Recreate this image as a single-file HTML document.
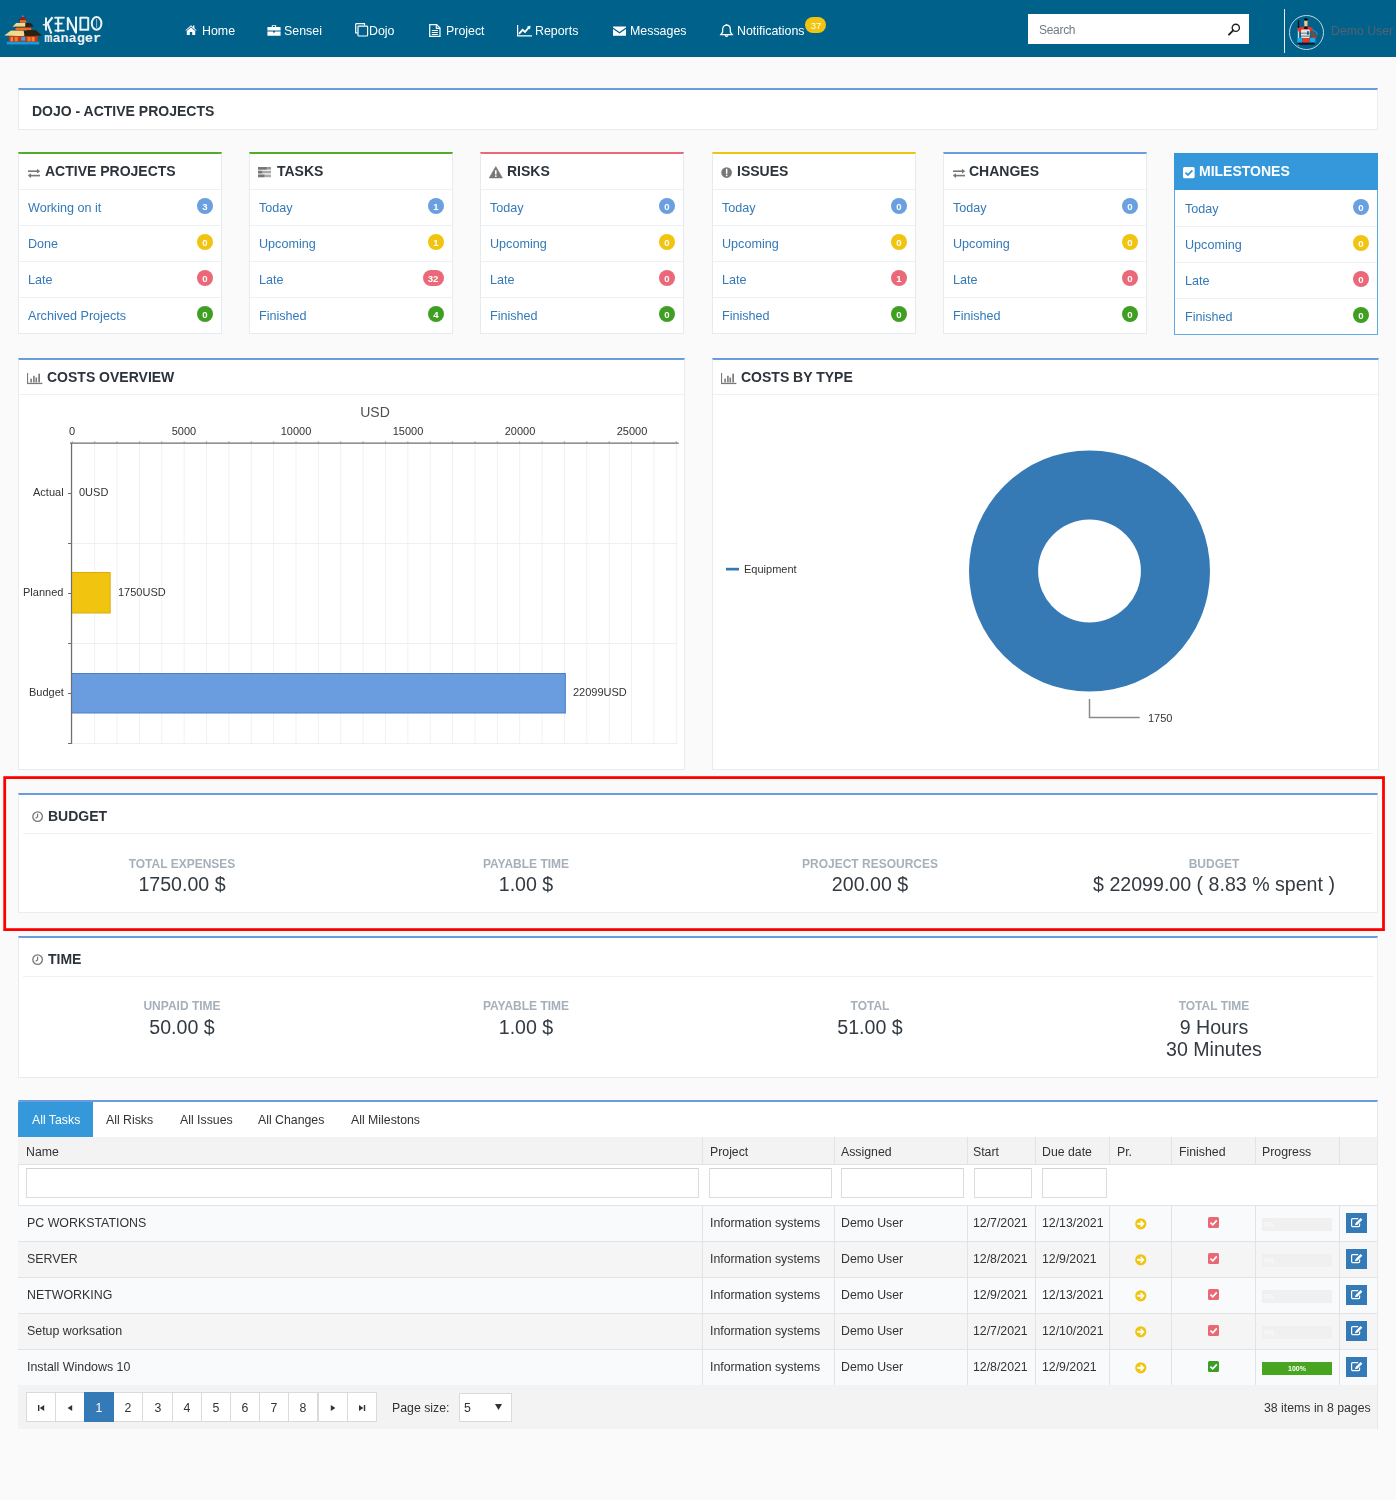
<!DOCTYPE html>
<html><head><meta charset="utf-8"><title>Kendo Manager</title>
<style>
html,body{margin:0;padding:0;}
body{width:1396px;height:1500px;background:#fafafa;position:relative;overflow:hidden;font-family:"Liberation Sans", sans-serif;}
.t{position:absolute;white-space:nowrap;line-height:1;will-change:transform;}
.r{position:absolute;box-sizing:border-box;}
svg.r{overflow:visible;}
</style></head><body>
<div class="r" style="left:0.00px;top:0.00px;width:1396.00px;height:57.00px;background:#00618b;"></div>
<svg class="r" style="left:0.00px;top:0.00px" width="110" height="50" viewBox="0 0 110 50">
<path d="M22.8 14.8 L23.5 17 L22.1 17 Z" fill="#e8c070"/>
<path d="M18.2 19.6 Q20.5 19.2 22.8 16.6 Q25.1 19.2 27.6 19.6 L26.4 20.4 L19.4 20.4 Z" fill="#a01810"/>
<rect x="20" y="20.2" width="6.1" height="2.5" fill="#e8702a"/>
<path d="M12.6 26.8 L16.2 23.1 L25.6 23.1 L25.6 26.8 Z" fill="#f0d890"/>
<path d="M25.4 23.1 L30.6 23.1 L34 26.6 L25.4 27 Z" fill="#2e2012"/>
<rect x="14.6" y="26.8" width="17" height="0.9" fill="#5a1a0c"/>
<rect x="15.6" y="27.6" width="15.6" height="2.6" fill="#ec6a24"/>
<rect x="11" y="30" width="25" height="0.7" fill="#2a1a10"/>
<path d="M4.2 35.4 L11 30.5 L26.8 30.5 L24.2 36.2 Z" fill="#f0d88c"/>
<path d="M23.6 30.5 L36.2 30.5 L42 35.4 L24.6 36.2 Z" fill="#30200e"/>
<rect x="8.9" y="36.1" width="28.9" height="5.7" fill="#c8361a"/>
<rect x="10.6" y="37" width="2.4" height="4.4" fill="#f08a34"/><rect x="14.6" y="37" width="3.2" height="4.4" fill="#f07a2c"/>
<rect x="27.4" y="37" width="3.2" height="4.4" fill="#f07a2c"/><rect x="31.6" y="37" width="3" height="4.4" fill="#f08a34"/>
<rect x="21.3" y="37" width="3.9" height="3.6" fill="#14b4f4"/>
<rect x="6.8" y="41.8" width="32.5" height="2.7" fill="#1a9ad8"/>
<g stroke="#eef3f6" stroke-width="2" fill="none" stroke-linecap="butt">
<path d="M46 17.6 L46 30.6"/><path d="M46.2 25 L52.6 17.2" stroke-width="2.2"/><path d="M47.6 23.6 L51.4 33.6" stroke-width="2.1"/><path d="M42.8 24.8 L46 24.8" stroke-width="1.4"/>
<path d="M58.2 17.2 L58.2 32.2"/><path d="M54.4 17.7 L64.6 17.7" stroke-width="1.9"/><path d="M54.6 23.6 L62.6 23.6" stroke-width="1.9"/><path d="M54.6 30.6 L64.6 30.6" stroke-width="1.9"/>
<path d="M67.8 17.4 L67.8 30.2"/><path d="M67.8 17.4 L75.8 32.6" stroke-width="2.1"/><path d="M76 16.4 L76 33.6"/>
<path d="M80.4 17.2 L80.4 30.4"/><path d="M79.8 17.7 L87.8 17.7"/><path d="M88.2 17.2 L88.2 30.4"/><path d="M79.8 29.7 L88.6 29.7"/>
<ellipse cx="96.6" cy="23.4" rx="4.8" ry="6.4" stroke-width="2"/><path d="M96.6 18.8 L96.6 28" stroke-width="0.9" opacity="0.7"/>
</g>
<text x="44.3" y="41.9" font-family="Liberation Mono" font-size="12.6" font-weight="bold" fill="#eef3f6" textLength="56.7" lengthAdjust="spacingAndGlyphs">manager</text>
</svg>
<svg class="r" style="left:185.00px;top:25.00px" width="12" height="10" viewBox="0 0 12 10"><path d="M6 0.3 L0.2 5.4 L1.4 5.6 L6 1.6 L10.6 5.6 L11.8 5.4 L9.4 3.3 L9.4 0.6 L8 0.6 L8 2.1 Z M1.8 6 L6 2.4 L10.2 6 L10.2 10 L7.2 10 L7.2 7 L4.8 7 L4.8 10 L1.8 10 Z" fill="#fff"/></svg>
<svg class="r" style="left:267.00px;top:25.00px" width="14" height="11" viewBox="0 0 14 11"><path d="M4.8 0.2 L9.2 0.2 L9.2 2 L13.3 2 Q13.6 2 13.6 2.4 L13.6 5.6 L0.4 5.6 L0.4 2.4 Q0.4 2 0.8 2 L4.8 2 Z M5.8 1 L5.8 2 L8.2 2 L8.2 1 Z M0.4 6.5 L6 6.5 L6 7.6 L8 7.6 L8 6.5 L13.6 6.5 L13.6 10.4 Q13.6 10.8 13.2 10.8 L0.8 10.8 Q0.4 10.8 0.4 10.4 Z" fill="#fff"/></svg>
<svg class="r" style="left:355.00px;top:23.00px" width="14" height="14" viewBox="0 0 14 14"><path d="M0.7 0.7 L9.5 0.7 L9.5 2.6 M0.7 0.7 L0.7 9.8 L2.6 9.8" stroke="#fff" stroke-width="1.2" fill="none"/><rect x="3" y="3.2" width="9.6" height="9.8" rx="0.8" stroke="#fff" stroke-width="1.2" fill="none"/></svg>
<svg class="r" style="left:429.00px;top:24.00px" width="12" height="13" viewBox="0 0 12 13"><path d="M0.7 0.7 L7.6 0.7 L11 4.1 L11 12.3 L0.7 12.3 Z" stroke="#fff" stroke-width="1.2" fill="none"/><path d="M7.3 0.8 L7.3 4.4 L10.9 4.4" stroke="#fff" stroke-width="1.1" fill="none"/><rect x="2.8" y="6" width="6" height="1" fill="#fff"/><rect x="2.8" y="8" width="6" height="1" fill="#fff"/><rect x="2.8" y="10" width="6" height="1" fill="#fff"/></svg>
<svg class="r" style="left:517.00px;top:25.00px" width="15" height="12" viewBox="0 0 15 12"><path d="M0.6 0 L0.6 10.8 L15 10.8" stroke="#fff" stroke-width="1.2" fill="none"/><path d="M2 8.8 L5.6 4.8 L8 7 L11.6 2.6" stroke="#fff" stroke-width="1.8" fill="none"/><path d="M10 1.6 L13.6 0.8 L13 4.4 Z" fill="#fff"/></svg>
<svg class="r" style="left:613.00px;top:26.00px" width="13" height="10" viewBox="0 0 13 10"><path d="M0 0.4 L13 0.4 L13 1.6 L6.5 6 L0 1.6 Z M0 3 L6.5 7.4 L13 3 L13 9.8 L0 9.8 Z" fill="#fff"/></svg>
<svg class="r" style="left:720.00px;top:24.00px" width="13" height="13" viewBox="0 0 13 13"><path d="M6.5 1.2 C3.6 1.2 2.6 3.6 2.6 6 L2.6 8.2 L0.8 10.6 L12.2 10.6 L10.4 8.2 L10.4 6 C10.4 3.6 9.4 1.2 6.5 1.2 Z" stroke="#fff" stroke-width="1.3" fill="none"/><circle cx="6.5" cy="0.9" r="0.9" fill="#fff"/><path d="M5 11.4 Q6.5 13.4 8 11.4" stroke="#fff" stroke-width="1.2" fill="none"/></svg>
<div class="t" style="left:201.60px;top:24.70px;font-size:12.4px;color:#fff;font-weight:normal;">Home</div>
<div class="t" style="left:284.40px;top:24.70px;font-size:12.4px;color:#fff;font-weight:normal;">Sensei</div>
<div class="t" style="left:369.20px;top:24.70px;font-size:12.4px;color:#fff;font-weight:normal;">Dojo</div>
<div class="t" style="left:445.90px;top:24.70px;font-size:12.4px;color:#fff;font-weight:normal;">Project</div>
<div class="t" style="left:535.30px;top:24.70px;font-size:12.4px;color:#fff;font-weight:normal;">Reports</div>
<div class="t" style="left:630.00px;top:24.70px;font-size:12.4px;color:#fff;font-weight:normal;">Messages</div>
<div class="t" style="left:736.90px;top:24.70px;font-size:12.4px;color:#fff;font-weight:normal;">Notifications</div>
<div class="r" style="left:804.80px;top:17.30px;width:21.40px;height:16.20px;background:#f1c40f;border-radius:8.1px;"></div>
<div class="t" style="left:415.60px;width:800px;text-align:center;top:21.07px;font-size:9.6px;color:#fff;font-weight:normal;">37</div>
<div class="r" style="left:1028.00px;top:14.00px;width:221.00px;height:30.00px;background:#fff;"></div>
<div class="t" style="left:1039.00px;top:23.84px;font-size:12px;color:#6f7a84;font-weight:normal;letter-spacing:-0.3px;">Search</div>
<svg class="r" style="left:1228.00px;top:23.00px" width="13" height="13" viewBox="0 0 13 13"><circle cx="7.8" cy="4.8" r="3.6" stroke="#222" stroke-width="1.4" fill="none"/><path d="M5.2 7.4 L1 11.6" stroke="#222" stroke-width="2" stroke-linecap="round"/></svg>
<div class="r" style="left:1284.00px;top:9.00px;width:1.20px;height:44.00px;background:#e4ecf1;"></div>
<div class="r" style="left:1288.60px;top:14.60px;width:35.00px;height:35.00px;border:1.3px solid #c4d6e2;border-radius:50%;"></div>
<svg class="r" style="left:1288.00px;top:14.00px" width="38" height="38" viewBox="0 0 38 38">
<rect x="9.8" y="6.3" width="1.4" height="8" fill="#111"/>
<rect x="9.8" y="14" width="1.4" height="17.6" fill="#d8d8d8"/>
<ellipse cx="17.9" cy="5.5" rx="1.7" ry="1.3" fill="#000"/>
<path d="M16.1 6.8 L19.6 6.8 L19.4 12.6 L16.4 12.6 Z" fill="#f2c890"/>
<path d="M9.2 14.8 Q11 12.6 16 12.8 L20 12.8 Q24.6 12.8 25.2 14.8 L24.4 17.6 L20.6 17.2 L15.4 17.2 L11.2 18.2 Z" fill="#e8322a"/>
<rect x="16.2" y="12.6" width="3.4" height="2.6" fill="#111"/>
<rect x="13" y="15.4" width="8.8" height="8.6" rx="1" fill="#e4e4e4"/>
<rect x="13" y="18.6" width="8.8" height="1.2" fill="#888"/><rect x="13" y="21.6" width="8.8" height="1.1" fill="#777"/>
<rect x="19" y="17.2" width="1.8" height="3.6" fill="#0a62a0"/>
<path d="M22.4 17 Q28.6 17.6 29.4 21.4 L27.6 25.4 L22.6 25.2 Z" fill="#555"/>
<path d="M24.6 16.2 Q28.6 17 29.6 20.6" stroke="#10a8ee" stroke-width="1" fill="none"/>
<path d="M24 23.6 L29 21.6 L26.4 25.6 Z" fill="#e03020"/>
<path d="M9.4 24.2 Q12 23.4 14.4 24.2 L14.4 28.8 L9.4 28.8 Z" fill="#10b0f0"/>
<path d="M21.6 24.2 Q24.8 23.4 27.4 24.4 L27.4 28.8 L21.6 28.8 Z" fill="#10b0f0"/>
<rect x="14.4" y="24" width="7.2" height="5.2" rx="1" fill="#e23a30"/>
<rect x="9.4" y="28.6" width="17.4" height="2.2" fill="#0c1c2a"/>
</svg>
<div class="t" style="left:1331.00px;top:24.79px;font-size:12.3px;color:#56616b;font-weight:normal;">Demo User</div>
<div class="r" style="left:18.00px;top:88.00px;width:1360.00px;height:42.00px;background:#fff;border:1px solid #e9ecef;border-top:2px solid #6a9de0;"></div>
<div class="t" style="left:32.00px;top:104.35px;font-size:14px;color:#2c333b;font-weight:bold;">DOJO - ACTIVE PROJECTS</div>
<div class="r" style="left:18.00px;top:152.00px;width:204.00px;height:182.00px;background:#fff;border:1px solid #e6ebf0;border-top:2px solid #50ac2a;"></div>
<svg class="r" style="left:27.00px;top:166.50px" width="14" height="12" viewBox="0 0 14 12"><path d="M1 4.2 L11.5 4.2" stroke="#777" stroke-width="1.6"/><path d="M10 1.8 L13.2 4.2 L10 6.6 Z" fill="#777"/><path d="M2.5 8.6 L13 8.6" stroke="#777" stroke-width="1.6"/><path d="M4 6.2 L0.8 8.6 L4 11 Z" fill="#777"/></svg>
<div class="t" style="left:45.00px;top:164.35px;font-size:14px;color:#2c333b;font-weight:bold;">ACTIVE PROJECTS</div>
<div class="r" style="left:19.00px;top:189.00px;width:202.00px;height:1.00px;background:#eef1f4;"></div>
<div class="t" style="left:27.50px;top:201.73px;font-size:12.6px;color:#337ab7;font-weight:normal;">Working on it</div>
<div class="r" style="left:196.70px;top:198.00px;width:16.00px;height:16.00px;background:#6a9fe0;border-radius:50%;"></div>
<div class="t" style="left:-195.30px;width:800px;text-align:center;top:202.37px;font-size:9.6px;color:#fff;font-weight:bold;">3</div>
<div class="r" style="left:19.00px;top:225.00px;width:202.00px;height:1.00px;background:#eef1f4;"></div>
<div class="t" style="left:27.50px;top:237.73px;font-size:12.6px;color:#337ab7;font-weight:normal;">Done</div>
<div class="r" style="left:196.70px;top:234.00px;width:16.00px;height:16.00px;background:#f1c40f;border-radius:50%;"></div>
<div class="t" style="left:-195.30px;width:800px;text-align:center;top:238.37px;font-size:9.6px;color:#fff;font-weight:bold;">0</div>
<div class="r" style="left:19.00px;top:261.00px;width:202.00px;height:1.00px;background:#eef1f4;"></div>
<div class="t" style="left:27.50px;top:273.73px;font-size:12.6px;color:#337ab7;font-weight:normal;">Late</div>
<div class="r" style="left:196.70px;top:270.00px;width:16.00px;height:16.00px;background:#ea6878;border-radius:50%;"></div>
<div class="t" style="left:-195.30px;width:800px;text-align:center;top:274.37px;font-size:9.6px;color:#fff;font-weight:bold;">0</div>
<div class="r" style="left:19.00px;top:297.00px;width:202.00px;height:1.00px;background:#eef1f4;"></div>
<div class="t" style="left:27.50px;top:309.73px;font-size:12.6px;color:#337ab7;font-weight:normal;">Archived Projects</div>
<div class="r" style="left:196.70px;top:306.00px;width:16.00px;height:16.00px;background:#3f9f22;border-radius:50%;"></div>
<div class="t" style="left:-195.30px;width:800px;text-align:center;top:310.37px;font-size:9.6px;color:#fff;font-weight:bold;">0</div>
<div class="r" style="left:249.00px;top:152.00px;width:204.00px;height:182.00px;background:#fff;border:1px solid #e6ebf0;border-top:2px solid #50ac2a;"></div>
<svg class="r" style="left:258.00px;top:166.00px" width="13" height="12" viewBox="0 0 13 12"><rect x="0" y="1" width="13" height="2.6" fill="#999"/><rect x="0" y="1" width="8.5" height="2.6" fill="#777"/><rect x="0" y="4.8" width="13" height="2.6" fill="#aaa"/><rect x="0" y="4.8" width="4.2" height="2.6" fill="#777"/><rect x="0" y="8.6" width="13" height="2.6" fill="#aaa"/><rect x="0" y="8.6" width="6.4" height="2.6" fill="#777"/></svg>
<div class="t" style="left:277.20px;top:164.35px;font-size:14px;color:#2c333b;font-weight:bold;">TASKS</div>
<div class="r" style="left:250.00px;top:189.00px;width:202.00px;height:1.00px;background:#eef1f4;"></div>
<div class="t" style="left:258.50px;top:201.73px;font-size:12.6px;color:#337ab7;font-weight:normal;">Today</div>
<div class="r" style="left:427.70px;top:198.00px;width:16.00px;height:16.00px;background:#6a9fe0;border-radius:50%;"></div>
<div class="t" style="left:35.70px;width:800px;text-align:center;top:202.37px;font-size:9.6px;color:#fff;font-weight:bold;">1</div>
<div class="r" style="left:250.00px;top:225.00px;width:202.00px;height:1.00px;background:#eef1f4;"></div>
<div class="t" style="left:258.50px;top:237.73px;font-size:12.6px;color:#337ab7;font-weight:normal;">Upcoming</div>
<div class="r" style="left:427.70px;top:234.00px;width:16.00px;height:16.00px;background:#f1c40f;border-radius:50%;"></div>
<div class="t" style="left:35.70px;width:800px;text-align:center;top:238.37px;font-size:9.6px;color:#fff;font-weight:bold;">1</div>
<div class="r" style="left:250.00px;top:261.00px;width:202.00px;height:1.00px;background:#eef1f4;"></div>
<div class="t" style="left:258.50px;top:273.73px;font-size:12.6px;color:#337ab7;font-weight:normal;">Late</div>
<div class="r" style="left:422.70px;top:270.00px;width:21.00px;height:16.00px;background:#ea6878;border-radius:8px;"></div>
<div class="t" style="left:33.20px;width:800px;text-align:center;top:274.37px;font-size:9.6px;color:#fff;font-weight:bold;">32</div>
<div class="r" style="left:250.00px;top:297.00px;width:202.00px;height:1.00px;background:#eef1f4;"></div>
<div class="t" style="left:258.50px;top:309.73px;font-size:12.6px;color:#337ab7;font-weight:normal;">Finished</div>
<div class="r" style="left:427.70px;top:306.00px;width:16.00px;height:16.00px;background:#3f9f22;border-radius:50%;"></div>
<div class="t" style="left:35.70px;width:800px;text-align:center;top:310.37px;font-size:9.6px;color:#fff;font-weight:bold;">4</div>
<div class="r" style="left:480.00px;top:152.00px;width:204.00px;height:182.00px;background:#fff;border:1px solid #e6ebf0;border-top:2px solid #ea6878;"></div>
<svg class="r" style="left:488.60px;top:165.60px" width="14" height="13" viewBox="0 0 14 13"><path d="M6.8 0.6 L13.4 11.9 L0.2 11.9 Z" fill="#777" stroke="#777" stroke-width="0.6" stroke-linejoin="round"/><rect x="6" y="4.2" width="1.6" height="4.3" fill="#fff"/><rect x="6" y="9.4" width="1.6" height="1.5" fill="#fff"/></svg>
<div class="t" style="left:507.40px;top:164.35px;font-size:14px;color:#2c333b;font-weight:bold;">RISKS</div>
<div class="r" style="left:481.00px;top:189.00px;width:202.00px;height:1.00px;background:#eef1f4;"></div>
<div class="t" style="left:489.50px;top:201.73px;font-size:12.6px;color:#337ab7;font-weight:normal;">Today</div>
<div class="r" style="left:658.70px;top:198.00px;width:16.00px;height:16.00px;background:#6a9fe0;border-radius:50%;"></div>
<div class="t" style="left:266.70px;width:800px;text-align:center;top:202.37px;font-size:9.6px;color:#fff;font-weight:bold;">0</div>
<div class="r" style="left:481.00px;top:225.00px;width:202.00px;height:1.00px;background:#eef1f4;"></div>
<div class="t" style="left:489.50px;top:237.73px;font-size:12.6px;color:#337ab7;font-weight:normal;">Upcoming</div>
<div class="r" style="left:658.70px;top:234.00px;width:16.00px;height:16.00px;background:#f1c40f;border-radius:50%;"></div>
<div class="t" style="left:266.70px;width:800px;text-align:center;top:238.37px;font-size:9.6px;color:#fff;font-weight:bold;">0</div>
<div class="r" style="left:481.00px;top:261.00px;width:202.00px;height:1.00px;background:#eef1f4;"></div>
<div class="t" style="left:489.50px;top:273.73px;font-size:12.6px;color:#337ab7;font-weight:normal;">Late</div>
<div class="r" style="left:658.70px;top:270.00px;width:16.00px;height:16.00px;background:#ea6878;border-radius:50%;"></div>
<div class="t" style="left:266.70px;width:800px;text-align:center;top:274.37px;font-size:9.6px;color:#fff;font-weight:bold;">0</div>
<div class="r" style="left:481.00px;top:297.00px;width:202.00px;height:1.00px;background:#eef1f4;"></div>
<div class="t" style="left:489.50px;top:309.73px;font-size:12.6px;color:#337ab7;font-weight:normal;">Finished</div>
<div class="r" style="left:658.70px;top:306.00px;width:16.00px;height:16.00px;background:#3f9f22;border-radius:50%;"></div>
<div class="t" style="left:266.70px;width:800px;text-align:center;top:310.37px;font-size:9.6px;color:#fff;font-weight:bold;">0</div>
<div class="r" style="left:712.00px;top:152.00px;width:204.00px;height:182.00px;background:#fff;border:1px solid #e6ebf0;border-top:2px solid #f1c40f;"></div>
<svg class="r" style="left:720.70px;top:165.60px" width="12" height="13" viewBox="0 0 12 13"><circle cx="5.6" cy="6.6" r="5.3" fill="#777"/><rect x="4.9" y="2.8" width="1.5" height="5" fill="#fff"/><rect x="4.9" y="8.7" width="1.5" height="1.5" fill="#fff"/></svg>
<div class="t" style="left:737.10px;top:164.35px;font-size:14px;color:#2c333b;font-weight:bold;">ISSUES</div>
<div class="r" style="left:713.00px;top:189.00px;width:202.00px;height:1.00px;background:#eef1f4;"></div>
<div class="t" style="left:721.50px;top:201.73px;font-size:12.6px;color:#337ab7;font-weight:normal;">Today</div>
<div class="r" style="left:890.70px;top:198.00px;width:16.00px;height:16.00px;background:#6a9fe0;border-radius:50%;"></div>
<div class="t" style="left:498.70px;width:800px;text-align:center;top:202.37px;font-size:9.6px;color:#fff;font-weight:bold;">0</div>
<div class="r" style="left:713.00px;top:225.00px;width:202.00px;height:1.00px;background:#eef1f4;"></div>
<div class="t" style="left:721.50px;top:237.73px;font-size:12.6px;color:#337ab7;font-weight:normal;">Upcoming</div>
<div class="r" style="left:890.70px;top:234.00px;width:16.00px;height:16.00px;background:#f1c40f;border-radius:50%;"></div>
<div class="t" style="left:498.70px;width:800px;text-align:center;top:238.37px;font-size:9.6px;color:#fff;font-weight:bold;">0</div>
<div class="r" style="left:713.00px;top:261.00px;width:202.00px;height:1.00px;background:#eef1f4;"></div>
<div class="t" style="left:721.50px;top:273.73px;font-size:12.6px;color:#337ab7;font-weight:normal;">Late</div>
<div class="r" style="left:890.70px;top:270.00px;width:16.00px;height:16.00px;background:#ea6878;border-radius:50%;"></div>
<div class="t" style="left:498.70px;width:800px;text-align:center;top:274.37px;font-size:9.6px;color:#fff;font-weight:bold;">1</div>
<div class="r" style="left:713.00px;top:297.00px;width:202.00px;height:1.00px;background:#eef1f4;"></div>
<div class="t" style="left:721.50px;top:309.73px;font-size:12.6px;color:#337ab7;font-weight:normal;">Finished</div>
<div class="r" style="left:890.70px;top:306.00px;width:16.00px;height:16.00px;background:#3f9f22;border-radius:50%;"></div>
<div class="t" style="left:498.70px;width:800px;text-align:center;top:310.37px;font-size:9.6px;color:#fff;font-weight:bold;">0</div>
<div class="r" style="left:943.00px;top:152.00px;width:204.00px;height:182.00px;background:#fff;border:1px solid #e6ebf0;border-top:2px solid #6a9de0;"></div>
<svg class="r" style="left:952.00px;top:166.50px" width="14" height="12" viewBox="0 0 14 12"><path d="M1 4.2 L11.5 4.2" stroke="#777" stroke-width="1.6"/><path d="M10 1.8 L13.2 4.2 L10 6.6 Z" fill="#777"/><path d="M2.5 8.6 L13 8.6" stroke="#777" stroke-width="1.6"/><path d="M4 6.2 L0.8 8.6 L4 11 Z" fill="#777"/></svg>
<div class="t" style="left:969.40px;top:164.35px;font-size:14px;color:#2c333b;font-weight:bold;">CHANGES</div>
<div class="r" style="left:944.00px;top:189.00px;width:202.00px;height:1.00px;background:#eef1f4;"></div>
<div class="t" style="left:952.50px;top:201.73px;font-size:12.6px;color:#337ab7;font-weight:normal;">Today</div>
<div class="r" style="left:1121.70px;top:198.00px;width:16.00px;height:16.00px;background:#6a9fe0;border-radius:50%;"></div>
<div class="t" style="left:729.70px;width:800px;text-align:center;top:202.37px;font-size:9.6px;color:#fff;font-weight:bold;">0</div>
<div class="r" style="left:944.00px;top:225.00px;width:202.00px;height:1.00px;background:#eef1f4;"></div>
<div class="t" style="left:952.50px;top:237.73px;font-size:12.6px;color:#337ab7;font-weight:normal;">Upcoming</div>
<div class="r" style="left:1121.70px;top:234.00px;width:16.00px;height:16.00px;background:#f1c40f;border-radius:50%;"></div>
<div class="t" style="left:729.70px;width:800px;text-align:center;top:238.37px;font-size:9.6px;color:#fff;font-weight:bold;">0</div>
<div class="r" style="left:944.00px;top:261.00px;width:202.00px;height:1.00px;background:#eef1f4;"></div>
<div class="t" style="left:952.50px;top:273.73px;font-size:12.6px;color:#337ab7;font-weight:normal;">Late</div>
<div class="r" style="left:1121.70px;top:270.00px;width:16.00px;height:16.00px;background:#ea6878;border-radius:50%;"></div>
<div class="t" style="left:729.70px;width:800px;text-align:center;top:274.37px;font-size:9.6px;color:#fff;font-weight:bold;">0</div>
<div class="r" style="left:944.00px;top:297.00px;width:202.00px;height:1.00px;background:#eef1f4;"></div>
<div class="t" style="left:952.50px;top:309.73px;font-size:12.6px;color:#337ab7;font-weight:normal;">Finished</div>
<div class="r" style="left:1121.70px;top:306.00px;width:16.00px;height:16.00px;background:#3f9f22;border-radius:50%;"></div>
<div class="t" style="left:729.70px;width:800px;text-align:center;top:310.37px;font-size:9.6px;color:#fff;font-weight:bold;">0</div>
<div class="r" style="left:1174.00px;top:152.50px;width:204.00px;height:182.50px;background:#fff;border:1px solid #5fa8e2;border-top:1px solid #5b93d8;"></div>
<div class="r" style="left:1174.00px;top:152.50px;width:204.00px;height:37.50px;background:#3498db;"></div>
<svg class="r" style="left:1182.50px;top:166.50px" width="12" height="12" viewBox="0 0 12 12"><rect x="0" y="0" width="11.6" height="11.3" rx="1.6" fill="#fff"/><path d="M2.4 5.6 L4.9 8 L9.4 3.4" stroke="#3498db" stroke-width="1.8" fill="none"/></svg>
<div class="t" style="left:1198.90px;top:164.35px;font-size:14px;color:#fff;font-weight:bold;">MILESTONES</div>
<div class="t" style="left:1184.50px;top:202.73px;font-size:12.6px;color:#337ab7;font-weight:normal;">Today</div>
<div class="r" style="left:1352.70px;top:199.00px;width:16.00px;height:16.00px;background:#6a9fe0;border-radius:50%;"></div>
<div class="t" style="left:960.70px;width:800px;text-align:center;top:203.37px;font-size:9.6px;color:#fff;font-weight:bold;">0</div>
<div class="r" style="left:1175.00px;top:226.00px;width:202.00px;height:1.00px;background:#eef1f4;"></div>
<div class="t" style="left:1184.50px;top:238.73px;font-size:12.6px;color:#337ab7;font-weight:normal;">Upcoming</div>
<div class="r" style="left:1352.70px;top:235.00px;width:16.00px;height:16.00px;background:#f1c40f;border-radius:50%;"></div>
<div class="t" style="left:960.70px;width:800px;text-align:center;top:239.37px;font-size:9.6px;color:#fff;font-weight:bold;">0</div>
<div class="r" style="left:1175.00px;top:262.00px;width:202.00px;height:1.00px;background:#eef1f4;"></div>
<div class="t" style="left:1184.50px;top:274.73px;font-size:12.6px;color:#337ab7;font-weight:normal;">Late</div>
<div class="r" style="left:1352.70px;top:271.00px;width:16.00px;height:16.00px;background:#ea6878;border-radius:50%;"></div>
<div class="t" style="left:960.70px;width:800px;text-align:center;top:275.37px;font-size:9.6px;color:#fff;font-weight:bold;">0</div>
<div class="r" style="left:1175.00px;top:298.00px;width:202.00px;height:1.00px;background:#eef1f4;"></div>
<div class="t" style="left:1184.50px;top:310.73px;font-size:12.6px;color:#337ab7;font-weight:normal;">Finished</div>
<div class="r" style="left:1352.70px;top:307.00px;width:16.00px;height:16.00px;background:#3f9f22;border-radius:50%;"></div>
<div class="t" style="left:960.70px;width:800px;text-align:center;top:311.37px;font-size:9.6px;color:#fff;font-weight:bold;">0</div>
<div class="r" style="left:18.00px;top:358.00px;width:666.50px;height:412.00px;background:#fff;border:1px solid #e9ecef;border-top:2px solid #6a9de0;"></div>
<div class="r" style="left:19.00px;top:394.00px;width:664.50px;height:1.00px;background:#eef1f4;"></div>
<svg class="r" style="left:26.50px;top:372.50px" width="17" height="12" viewBox="0 0 17 12"><rect x="0" y="0" width="1.1" height="11" fill="#7a7a7a"/><rect x="0" y="9.8" width="15.4" height="1.3" fill="#7a7a7a"/><rect x="3.3" y="5.6" width="1.6" height="3.8" fill="#7a7a7a"/><rect x="6.1" y="2.8" width="1.6" height="6.6" fill="#7a7a7a"/><rect x="8.5" y="4.5" width="1.6" height="4.9" fill="#7a7a7a"/><rect x="11.3" y="0.7" width="1.7" height="8.7" fill="#7a7a7a"/></svg>
<div class="r" style="left:712.00px;top:358.00px;width:666.50px;height:412.00px;background:#fff;border:1px solid #e9ecef;border-top:2px solid #6a9de0;"></div>
<div class="r" style="left:713.00px;top:394.00px;width:664.50px;height:1.00px;background:#eef1f4;"></div>
<svg class="r" style="left:720.50px;top:372.50px" width="17" height="12" viewBox="0 0 17 12"><rect x="0" y="0" width="1.1" height="11" fill="#7a7a7a"/><rect x="0" y="9.8" width="15.4" height="1.3" fill="#7a7a7a"/><rect x="3.3" y="5.6" width="1.6" height="3.8" fill="#7a7a7a"/><rect x="6.1" y="2.8" width="1.6" height="6.6" fill="#7a7a7a"/><rect x="8.5" y="4.5" width="1.6" height="4.9" fill="#7a7a7a"/><rect x="11.3" y="0.7" width="1.7" height="8.7" fill="#7a7a7a"/></svg>
<div class="t" style="left:47.40px;top:370.35px;font-size:14px;color:#2c333b;font-weight:bold;">COSTS OVERVIEW</div>
<div class="t" style="left:741.00px;top:370.35px;font-size:14px;color:#2c333b;font-weight:bold;">COSTS BY TYPE</div>
<svg class="r" style="left:0;top:0" width="700" height="780"><line x1="72.30" y1="443" x2="72.30" y2="743" stroke="#f1f1f1" stroke-width="1"/><line x1="72.30" y1="441" x2="72.30" y2="443" stroke="#bbb" stroke-width="1"/><line x1="94.67" y1="443" x2="94.67" y2="743" stroke="#f1f1f1" stroke-width="1"/><line x1="94.67" y1="441" x2="94.67" y2="443" stroke="#bbb" stroke-width="1"/><line x1="117.04" y1="443" x2="117.04" y2="743" stroke="#f1f1f1" stroke-width="1"/><line x1="117.04" y1="441" x2="117.04" y2="443" stroke="#bbb" stroke-width="1"/><line x1="139.41" y1="443" x2="139.41" y2="743" stroke="#f1f1f1" stroke-width="1"/><line x1="139.41" y1="441" x2="139.41" y2="443" stroke="#bbb" stroke-width="1"/><line x1="161.78" y1="443" x2="161.78" y2="743" stroke="#f1f1f1" stroke-width="1"/><line x1="161.78" y1="441" x2="161.78" y2="443" stroke="#bbb" stroke-width="1"/><line x1="184.15" y1="443" x2="184.15" y2="743" stroke="#f1f1f1" stroke-width="1"/><line x1="184.15" y1="441" x2="184.15" y2="443" stroke="#bbb" stroke-width="1"/><line x1="206.52" y1="443" x2="206.52" y2="743" stroke="#f1f1f1" stroke-width="1"/><line x1="206.52" y1="441" x2="206.52" y2="443" stroke="#bbb" stroke-width="1"/><line x1="228.89" y1="443" x2="228.89" y2="743" stroke="#f1f1f1" stroke-width="1"/><line x1="228.89" y1="441" x2="228.89" y2="443" stroke="#bbb" stroke-width="1"/><line x1="251.26" y1="443" x2="251.26" y2="743" stroke="#f1f1f1" stroke-width="1"/><line x1="251.26" y1="441" x2="251.26" y2="443" stroke="#bbb" stroke-width="1"/><line x1="273.63" y1="443" x2="273.63" y2="743" stroke="#f1f1f1" stroke-width="1"/><line x1="273.63" y1="441" x2="273.63" y2="443" stroke="#bbb" stroke-width="1"/><line x1="296.00" y1="443" x2="296.00" y2="743" stroke="#f1f1f1" stroke-width="1"/><line x1="296.00" y1="441" x2="296.00" y2="443" stroke="#bbb" stroke-width="1"/><line x1="318.37" y1="443" x2="318.37" y2="743" stroke="#f1f1f1" stroke-width="1"/><line x1="318.37" y1="441" x2="318.37" y2="443" stroke="#bbb" stroke-width="1"/><line x1="340.74" y1="443" x2="340.74" y2="743" stroke="#f1f1f1" stroke-width="1"/><line x1="340.74" y1="441" x2="340.74" y2="443" stroke="#bbb" stroke-width="1"/><line x1="363.11" y1="443" x2="363.11" y2="743" stroke="#f1f1f1" stroke-width="1"/><line x1="363.11" y1="441" x2="363.11" y2="443" stroke="#bbb" stroke-width="1"/><line x1="385.48" y1="443" x2="385.48" y2="743" stroke="#f1f1f1" stroke-width="1"/><line x1="385.48" y1="441" x2="385.48" y2="443" stroke="#bbb" stroke-width="1"/><line x1="407.85" y1="443" x2="407.85" y2="743" stroke="#f1f1f1" stroke-width="1"/><line x1="407.85" y1="441" x2="407.85" y2="443" stroke="#bbb" stroke-width="1"/><line x1="430.22" y1="443" x2="430.22" y2="743" stroke="#f1f1f1" stroke-width="1"/><line x1="430.22" y1="441" x2="430.22" y2="443" stroke="#bbb" stroke-width="1"/><line x1="452.59" y1="443" x2="452.59" y2="743" stroke="#f1f1f1" stroke-width="1"/><line x1="452.59" y1="441" x2="452.59" y2="443" stroke="#bbb" stroke-width="1"/><line x1="474.96" y1="443" x2="474.96" y2="743" stroke="#f1f1f1" stroke-width="1"/><line x1="474.96" y1="441" x2="474.96" y2="443" stroke="#bbb" stroke-width="1"/><line x1="497.33" y1="443" x2="497.33" y2="743" stroke="#f1f1f1" stroke-width="1"/><line x1="497.33" y1="441" x2="497.33" y2="443" stroke="#bbb" stroke-width="1"/><line x1="519.70" y1="443" x2="519.70" y2="743" stroke="#f1f1f1" stroke-width="1"/><line x1="519.70" y1="441" x2="519.70" y2="443" stroke="#bbb" stroke-width="1"/><line x1="542.07" y1="443" x2="542.07" y2="743" stroke="#f1f1f1" stroke-width="1"/><line x1="542.07" y1="441" x2="542.07" y2="443" stroke="#bbb" stroke-width="1"/><line x1="564.44" y1="443" x2="564.44" y2="743" stroke="#f1f1f1" stroke-width="1"/><line x1="564.44" y1="441" x2="564.44" y2="443" stroke="#bbb" stroke-width="1"/><line x1="586.81" y1="443" x2="586.81" y2="743" stroke="#f1f1f1" stroke-width="1"/><line x1="586.81" y1="441" x2="586.81" y2="443" stroke="#bbb" stroke-width="1"/><line x1="609.18" y1="443" x2="609.18" y2="743" stroke="#f1f1f1" stroke-width="1"/><line x1="609.18" y1="441" x2="609.18" y2="443" stroke="#bbb" stroke-width="1"/><line x1="631.55" y1="443" x2="631.55" y2="743" stroke="#f1f1f1" stroke-width="1"/><line x1="631.55" y1="441" x2="631.55" y2="443" stroke="#bbb" stroke-width="1"/><line x1="653.92" y1="443" x2="653.92" y2="743" stroke="#f1f1f1" stroke-width="1"/><line x1="653.92" y1="441" x2="653.92" y2="443" stroke="#bbb" stroke-width="1"/><line x1="676.29" y1="443" x2="676.29" y2="743" stroke="#f1f1f1" stroke-width="1"/><line x1="676.29" y1="441" x2="676.29" y2="443" stroke="#bbb" stroke-width="1"/><line x1="72" y1="543.5" x2="678" y2="543.5" stroke="#efefef" stroke-width="1"/><line x1="72" y1="643.5" x2="678" y2="643.5" stroke="#efefef" stroke-width="1"/><line x1="72" y1="743.5" x2="678" y2="743.5" stroke="#efefef" stroke-width="1"/><rect x="71.5" y="572.5" width="38.65" height="40.5" fill="#f1c40f" stroke="#d9ac0a" stroke-width="1"/><rect x="71.5" y="673.5" width="493.85" height="39.5" fill="#6a9de0" stroke="#4c7fc4" stroke-width="1"/><line x1="70" y1="443.1" x2="678.7" y2="443.1" stroke="#6e6e6e" stroke-width="1.3"/><line x1="71.5" y1="443" x2="71.5" y2="744" stroke="#6e6e6e" stroke-width="1.2"/><line x1="68" y1="493.5" x2="71.5" y2="493.5" stroke="#6e6e6e" stroke-width="1"/><line x1="68" y1="543.5" x2="71.5" y2="543.5" stroke="#6e6e6e" stroke-width="1"/><line x1="68" y1="593.5" x2="71.5" y2="593.5" stroke="#6e6e6e" stroke-width="1"/><line x1="68" y1="643.5" x2="71.5" y2="643.5" stroke="#6e6e6e" stroke-width="1"/><line x1="68" y1="693.5" x2="71.5" y2="693.5" stroke="#6e6e6e" stroke-width="1"/><line x1="68" y1="743.5" x2="71.5" y2="743.5" stroke="#6e6e6e" stroke-width="1"/></svg>
<div class="t" style="left:-25.00px;width:800px;text-align:center;top:405.35px;font-size:14px;color:#505050;font-weight:normal;">USD</div>
<div class="t" style="left:-327.70px;width:800px;text-align:center;top:426.19px;font-size:11px;color:#333;font-weight:normal;">0</div>
<div class="t" style="left:-215.85px;width:800px;text-align:center;top:426.19px;font-size:11px;color:#333;font-weight:normal;">5000</div>
<div class="t" style="left:-104.00px;width:800px;text-align:center;top:426.19px;font-size:11px;color:#333;font-weight:normal;">10000</div>
<div class="t" style="left:7.85px;width:800px;text-align:center;top:426.19px;font-size:11px;color:#333;font-weight:normal;">15000</div>
<div class="t" style="left:119.70px;width:800px;text-align:center;top:426.19px;font-size:11px;color:#333;font-weight:normal;">20000</div>
<div class="t" style="left:231.55px;width:800px;text-align:center;top:426.19px;font-size:11px;color:#333;font-weight:normal;">25000</div>
<div class="t" style="right:1332.50px;text-align:right;top:487.49px;font-size:11px;color:#333;font-weight:normal;">Actual</div>
<div class="t" style="right:1332.50px;text-align:right;top:587.49px;font-size:11px;color:#333;font-weight:normal;">Planned</div>
<div class="t" style="right:1332.50px;text-align:right;top:687.49px;font-size:11px;color:#333;font-weight:normal;">Budget</div>
<div class="t" style="left:79.00px;top:487.49px;font-size:11px;color:#333;font-weight:normal;">0USD</div>
<div class="t" style="left:118.00px;top:587.49px;font-size:11px;color:#333;font-weight:normal;">1750USD</div>
<div class="t" style="left:573.00px;top:687.49px;font-size:11px;color:#333;font-weight:normal;">22099USD</div>
<svg class="r" style="left:700px;top:350px" width="696" height="430"><path fill-rule="evenodd" fill="#3579b5" d="M269.0,221 a120.5,120.5 0 1,0 241.0,0 a120.5,120.5 0 1,0 -241.0,0 Z M338.1,221 a51.4,51.4 0 1,0 102.8,0 a51.4,51.4 0 1,0 -102.8,0 Z"/><path d="M389.5 349 L389.5 367.5 L439.70000000000005 367.5" stroke="#8a8a8a" stroke-width="1.5" fill="none"/><rect x="26" y="217.8" width="13" height="2.7" fill="#3579b5"/></svg>
<div class="t" style="left:1148.00px;top:712.69px;font-size:11px;color:#333;font-weight:normal;">1750</div>
<div class="t" style="left:744.00px;top:564.39px;font-size:11px;color:#333;font-weight:normal;">Equipment</div>
<svg class="r" style="left:0;top:770px" width="1396" height="170"><rect x="4.7" y="7.6" width="1378.8" height="152" fill="none" stroke="#ff0000" stroke-width="2.8"/></svg>
<div class="r" style="left:18.00px;top:793.00px;width:1360.00px;height:120.00px;background:#fff;border:1px solid #e9ecef;border-top:2px solid #6a9de0;"></div>
<div class="r" style="left:23.00px;top:833.00px;width:1350.00px;height:1.00px;background:#eef1f4;"></div>
<svg class="r" style="left:32.00px;top:811.20px" width="12" height="12" viewBox="0 0 12 12"><circle cx="5.6" cy="5.6" r="4.8" stroke="#777" stroke-width="1.3" fill="none"/><path d="M5.6 2.8 L5.6 5.9 L3.6 7.2" stroke="#777" stroke-width="1.2" fill="none"/></svg>
<div class="t" style="left:48.00px;top:809.35px;font-size:14px;color:#2c333b;font-weight:bold;">BUDGET</div>
<div class="t" style="left:-218.00px;width:800px;text-align:center;top:858.04px;font-size:12px;color:#a6b0ba;font-weight:bold;">TOTAL EXPENSES</div>
<div class="t" style="left:-218.00px;width:800px;text-align:center;top:875.11px;font-size:19.6px;color:#333a42;font-weight:normal;">1750.00 $</div>
<div class="t" style="left:126.00px;width:800px;text-align:center;top:858.04px;font-size:12px;color:#a6b0ba;font-weight:bold;">PAYABLE TIME</div>
<div class="t" style="left:126.00px;width:800px;text-align:center;top:875.11px;font-size:19.6px;color:#333a42;font-weight:normal;">1.00 $</div>
<div class="t" style="left:470.00px;width:800px;text-align:center;top:858.04px;font-size:12px;color:#a6b0ba;font-weight:bold;">PROJECT RESOURCES</div>
<div class="t" style="left:470.00px;width:800px;text-align:center;top:875.11px;font-size:19.6px;color:#333a42;font-weight:normal;">200.00 $</div>
<div class="t" style="left:814.00px;width:800px;text-align:center;top:858.04px;font-size:12px;color:#a6b0ba;font-weight:bold;">BUDGET</div>
<div class="t" style="left:814.00px;width:800px;text-align:center;top:875.11px;font-size:19.6px;color:#333a42;font-weight:normal;">$ 22099.00 ( 8.83 % spent )</div>
<div class="r" style="left:18.00px;top:936.00px;width:1360.00px;height:142.00px;background:#fff;border:1px solid #e9ecef;border-top:2px solid #6a9de0;"></div>
<div class="r" style="left:23.00px;top:976.00px;width:1350.00px;height:1.00px;background:#eef1f4;"></div>
<svg class="r" style="left:32.00px;top:954.00px" width="12" height="12" viewBox="0 0 12 12"><circle cx="5.6" cy="5.6" r="4.8" stroke="#777" stroke-width="1.3" fill="none"/><path d="M5.6 2.8 L5.6 5.9 L3.6 7.2" stroke="#777" stroke-width="1.2" fill="none"/></svg>
<div class="t" style="left:48.00px;top:951.95px;font-size:14px;color:#2c333b;font-weight:bold;">TIME</div>
<div class="t" style="left:-218.00px;width:800px;text-align:center;top:1000.44px;font-size:12px;color:#a6b0ba;font-weight:bold;">UNPAID TIME</div>
<div class="t" style="left:-218.00px;width:800px;text-align:center;top:1017.51px;font-size:19.6px;color:#333a42;font-weight:normal;">50.00 $</div>
<div class="t" style="left:126.00px;width:800px;text-align:center;top:1000.44px;font-size:12px;color:#a6b0ba;font-weight:bold;">PAYABLE TIME</div>
<div class="t" style="left:126.00px;width:800px;text-align:center;top:1017.51px;font-size:19.6px;color:#333a42;font-weight:normal;">1.00 $</div>
<div class="t" style="left:470.00px;width:800px;text-align:center;top:1000.44px;font-size:12px;color:#a6b0ba;font-weight:bold;">TOTAL</div>
<div class="t" style="left:470.00px;width:800px;text-align:center;top:1017.51px;font-size:19.6px;color:#333a42;font-weight:normal;">51.00 $</div>
<div class="t" style="left:814.00px;width:800px;text-align:center;top:1000.44px;font-size:12px;color:#a6b0ba;font-weight:bold;">TOTAL TIME</div>
<div class="t" style="left:814.00px;width:800px;text-align:center;top:1017.51px;font-size:19.6px;color:#333a42;font-weight:normal;">9 Hours</div>
<div class="t" style="left:814.00px;width:800px;text-align:center;top:1039.61px;font-size:19.6px;color:#333a42;font-weight:normal;">30 Minutes</div>
<div class="r" style="left:18.00px;top:1100.20px;width:1360.00px;height:328.80px;background:#fff;border:1px solid #e6eaee;border-top:2px solid #6a9de0;"></div>
<div class="r" style="left:18.00px;top:1102.20px;width:75.30px;height:35.20px;background:#3498db;"></div>
<div class="t" style="left:31.60px;top:1113.79px;font-size:12.3px;color:#fff;font-weight:normal;">All Tasks</div>
<div class="t" style="left:106.40px;top:1113.79px;font-size:12.3px;color:#333;font-weight:normal;">All Risks</div>
<div class="t" style="left:179.50px;top:1113.79px;font-size:12.3px;color:#333;font-weight:normal;">All Issues</div>
<div class="t" style="left:258.00px;top:1113.79px;font-size:12.3px;color:#333;font-weight:normal;">All Changes</div>
<div class="t" style="left:351.40px;top:1113.79px;font-size:12.3px;color:#333;font-weight:normal;">All Milestons</div>
<div class="r" style="left:18.00px;top:1137.40px;width:1359.00px;height:27.60px;background:#f3f3f3;border-bottom:1px solid #e2e2e2;"></div>
<div class="r" style="left:702.00px;top:1137.40px;width:1.00px;height:27.00px;background:#e3e3e3;"></div>
<div class="r" style="left:834.00px;top:1137.40px;width:1.00px;height:27.00px;background:#e3e3e3;"></div>
<div class="r" style="left:967.00px;top:1137.40px;width:1.00px;height:27.00px;background:#e3e3e3;"></div>
<div class="r" style="left:1035.00px;top:1137.40px;width:1.00px;height:27.00px;background:#e3e3e3;"></div>
<div class="r" style="left:1109.00px;top:1137.40px;width:1.00px;height:27.00px;background:#e3e3e3;"></div>
<div class="r" style="left:1171.00px;top:1137.40px;width:1.00px;height:27.00px;background:#e3e3e3;"></div>
<div class="r" style="left:1255.00px;top:1137.40px;width:1.00px;height:27.00px;background:#e3e3e3;"></div>
<div class="r" style="left:1339.00px;top:1137.40px;width:1.00px;height:27.00px;background:#e3e3e3;"></div>
<div class="t" style="left:26.00px;top:1145.79px;font-size:12.3px;color:#333;font-weight:normal;">Name</div>
<div class="t" style="left:709.60px;top:1145.79px;font-size:12.3px;color:#333;font-weight:normal;">Project</div>
<div class="t" style="left:841.40px;top:1145.79px;font-size:12.3px;color:#333;font-weight:normal;">Assigned</div>
<div class="t" style="left:973.30px;top:1145.79px;font-size:12.3px;color:#333;font-weight:normal;">Start</div>
<div class="t" style="left:1041.60px;top:1145.79px;font-size:12.3px;color:#333;font-weight:normal;">Due date</div>
<div class="t" style="left:1116.60px;top:1145.79px;font-size:12.3px;color:#333;font-weight:normal;">Pr.</div>
<div class="t" style="left:1178.50px;top:1145.79px;font-size:12.3px;color:#333;font-weight:normal;">Finished</div>
<div class="t" style="left:1262.30px;top:1145.79px;font-size:12.3px;color:#333;font-weight:normal;">Progress</div>
<div class="r" style="left:25.70px;top:1168.40px;width:673.80px;height:30.00px;background:#fff;border:1px solid #dcdcdc;border-top-color:#d2d2d2;"></div>
<div class="r" style="left:709.30px;top:1168.40px;width:123.10px;height:30.00px;background:#fff;border:1px solid #dcdcdc;border-top-color:#d2d2d2;"></div>
<div class="r" style="left:841.20px;top:1168.40px;width:123.30px;height:30.00px;background:#fff;border:1px solid #dcdcdc;border-top-color:#d2d2d2;"></div>
<div class="r" style="left:973.50px;top:1168.40px;width:58.90px;height:30.00px;background:#fff;border:1px solid #dcdcdc;border-top-color:#d2d2d2;"></div>
<div class="r" style="left:1041.60px;top:1168.40px;width:65.80px;height:30.00px;background:#fff;border:1px solid #dcdcdc;border-top-color:#d2d2d2;"></div>
<div class="r" style="left:18.00px;top:1205.00px;width:1359.00px;height:1.00px;background:#e3e3e3;"></div>
<div class="r" style="left:18.00px;top:1206.00px;width:1359.00px;height:35.00px;background:#f8fafc;"></div>
<div class="r" style="left:18.00px;top:1241.00px;width:1359.00px;height:1.00px;background:#e3e3e3;"></div>
<div class="r" style="left:702.00px;top:1206.00px;width:1.00px;height:35.00px;background:#e3e3e3;"></div>
<div class="r" style="left:834.00px;top:1206.00px;width:1.00px;height:35.00px;background:#e3e3e3;"></div>
<div class="r" style="left:967.00px;top:1206.00px;width:1.00px;height:35.00px;background:#e3e3e3;"></div>
<div class="r" style="left:1035.00px;top:1206.00px;width:1.00px;height:35.00px;background:#e3e3e3;"></div>
<div class="r" style="left:1109.00px;top:1206.00px;width:1.00px;height:35.00px;background:#e3e3e3;"></div>
<div class="r" style="left:1171.00px;top:1206.00px;width:1.00px;height:35.00px;background:#e3e3e3;"></div>
<div class="r" style="left:1255.00px;top:1206.00px;width:1.00px;height:35.00px;background:#e3e3e3;"></div>
<div class="r" style="left:1339.00px;top:1206.00px;width:1.00px;height:35.00px;background:#e3e3e3;"></div>
<div class="t" style="left:26.60px;top:1217.20px;font-size:12.4px;color:#333;font-weight:normal;">PC WORKSTATIONS</div>
<div class="t" style="left:709.60px;top:1217.29px;font-size:12.3px;color:#333;font-weight:normal;">Information systems</div>
<div class="t" style="left:841.40px;top:1217.29px;font-size:12.3px;color:#333;font-weight:normal;">Demo User</div>
<div class="t" style="left:973.30px;top:1217.29px;font-size:12.3px;color:#333;font-weight:normal;">12/7/2021</div>
<div class="t" style="left:1041.60px;top:1217.29px;font-size:12.3px;color:#333;font-weight:normal;">12/13/2021</div>
<svg class="r" style="left:1135.20px;top:1217.50px" width="12" height="12" viewBox="0 0 12 12"><circle cx="5.8" cy="5.8" r="5.6" fill="#f1c40f"/><path d="M2.2 5.8 L8.2 5.8" stroke="#fff" stroke-width="2" fill="none"/><path d="M5.6 3 L8.4 5.8 L5.6 8.6" stroke="#fff" stroke-width="1.7" fill="none"/></svg>
<svg class="r" style="left:1208.00px;top:1217.00px" width="12" height="12" viewBox="0 0 12 12"><rect x="0" y="0" width="11" height="11" rx="1.6" fill="#ea6874"/><path d="M2.4 5.6 L4.8 7.9 L8.8 3.4" stroke="#fff" stroke-width="1.7" fill="none"/></svg>
<div class="r" style="left:1262.00px;top:1217.70px;width:70.40px;height:13.00px;background:#f0f0f0;"></div>
<div class="t" style="left:1264.00px;top:1221.27px;font-size:7px;color:#fafafa;font-weight:bold;">0%</div>
<svg class="r" style="left:1345.80px;top:1213.00px" width="21" height="20" viewBox="0 0 21 20"><rect x="0" y="0" width="21" height="20" fill="#337ab7"/><path d="M12.2 5.6 L6.6 5.6 Q5.6 5.6 5.6 6.6 L5.6 12.6 Q5.6 13.6 6.6 13.6 L12.6 13.6 Q13.6 13.6 13.6 12.6 L13.6 10.4" stroke="#fff" stroke-width="1.2" fill="none"/><path d="M9 12.2 L9.6 10 L14.6 5 L16.4 6.8 L11.4 11.8 Z" fill="#fff"/></svg>
<div class="r" style="left:18.00px;top:1242.00px;width:1359.00px;height:35.00px;background:#f5f5f5;"></div>
<div class="r" style="left:18.00px;top:1277.00px;width:1359.00px;height:1.00px;background:#e3e3e3;"></div>
<div class="r" style="left:702.00px;top:1242.00px;width:1.00px;height:35.00px;background:#e3e3e3;"></div>
<div class="r" style="left:834.00px;top:1242.00px;width:1.00px;height:35.00px;background:#e3e3e3;"></div>
<div class="r" style="left:967.00px;top:1242.00px;width:1.00px;height:35.00px;background:#e3e3e3;"></div>
<div class="r" style="left:1035.00px;top:1242.00px;width:1.00px;height:35.00px;background:#e3e3e3;"></div>
<div class="r" style="left:1109.00px;top:1242.00px;width:1.00px;height:35.00px;background:#e3e3e3;"></div>
<div class="r" style="left:1171.00px;top:1242.00px;width:1.00px;height:35.00px;background:#e3e3e3;"></div>
<div class="r" style="left:1255.00px;top:1242.00px;width:1.00px;height:35.00px;background:#e3e3e3;"></div>
<div class="r" style="left:1339.00px;top:1242.00px;width:1.00px;height:35.00px;background:#e3e3e3;"></div>
<div class="t" style="left:26.60px;top:1253.20px;font-size:12.4px;color:#333;font-weight:normal;">SERVER</div>
<div class="t" style="left:709.60px;top:1253.29px;font-size:12.3px;color:#333;font-weight:normal;">Information systems</div>
<div class="t" style="left:841.40px;top:1253.29px;font-size:12.3px;color:#333;font-weight:normal;">Demo User</div>
<div class="t" style="left:973.30px;top:1253.29px;font-size:12.3px;color:#333;font-weight:normal;">12/8/2021</div>
<div class="t" style="left:1041.60px;top:1253.29px;font-size:12.3px;color:#333;font-weight:normal;">12/9/2021</div>
<svg class="r" style="left:1135.20px;top:1253.50px" width="12" height="12" viewBox="0 0 12 12"><circle cx="5.8" cy="5.8" r="5.6" fill="#f1c40f"/><path d="M2.2 5.8 L8.2 5.8" stroke="#fff" stroke-width="2" fill="none"/><path d="M5.6 3 L8.4 5.8 L5.6 8.6" stroke="#fff" stroke-width="1.7" fill="none"/></svg>
<svg class="r" style="left:1208.00px;top:1253.00px" width="12" height="12" viewBox="0 0 12 12"><rect x="0" y="0" width="11" height="11" rx="1.6" fill="#ea6874"/><path d="M2.4 5.6 L4.8 7.9 L8.8 3.4" stroke="#fff" stroke-width="1.7" fill="none"/></svg>
<div class="r" style="left:1262.00px;top:1253.70px;width:70.40px;height:13.00px;background:#f0f0f0;"></div>
<div class="t" style="left:1264.00px;top:1257.27px;font-size:7px;color:#fafafa;font-weight:bold;">0%</div>
<svg class="r" style="left:1345.80px;top:1249.00px" width="21" height="20" viewBox="0 0 21 20"><rect x="0" y="0" width="21" height="20" fill="#337ab7"/><path d="M12.2 5.6 L6.6 5.6 Q5.6 5.6 5.6 6.6 L5.6 12.6 Q5.6 13.6 6.6 13.6 L12.6 13.6 Q13.6 13.6 13.6 12.6 L13.6 10.4" stroke="#fff" stroke-width="1.2" fill="none"/><path d="M9 12.2 L9.6 10 L14.6 5 L16.4 6.8 L11.4 11.8 Z" fill="#fff"/></svg>
<div class="r" style="left:18.00px;top:1278.00px;width:1359.00px;height:35.00px;background:#f8fafc;"></div>
<div class="r" style="left:18.00px;top:1313.00px;width:1359.00px;height:1.00px;background:#e3e3e3;"></div>
<div class="r" style="left:702.00px;top:1278.00px;width:1.00px;height:35.00px;background:#e3e3e3;"></div>
<div class="r" style="left:834.00px;top:1278.00px;width:1.00px;height:35.00px;background:#e3e3e3;"></div>
<div class="r" style="left:967.00px;top:1278.00px;width:1.00px;height:35.00px;background:#e3e3e3;"></div>
<div class="r" style="left:1035.00px;top:1278.00px;width:1.00px;height:35.00px;background:#e3e3e3;"></div>
<div class="r" style="left:1109.00px;top:1278.00px;width:1.00px;height:35.00px;background:#e3e3e3;"></div>
<div class="r" style="left:1171.00px;top:1278.00px;width:1.00px;height:35.00px;background:#e3e3e3;"></div>
<div class="r" style="left:1255.00px;top:1278.00px;width:1.00px;height:35.00px;background:#e3e3e3;"></div>
<div class="r" style="left:1339.00px;top:1278.00px;width:1.00px;height:35.00px;background:#e3e3e3;"></div>
<div class="t" style="left:26.60px;top:1289.20px;font-size:12.4px;color:#333;font-weight:normal;">NETWORKING</div>
<div class="t" style="left:709.60px;top:1289.29px;font-size:12.3px;color:#333;font-weight:normal;">Information systems</div>
<div class="t" style="left:841.40px;top:1289.29px;font-size:12.3px;color:#333;font-weight:normal;">Demo User</div>
<div class="t" style="left:973.30px;top:1289.29px;font-size:12.3px;color:#333;font-weight:normal;">12/9/2021</div>
<div class="t" style="left:1041.60px;top:1289.29px;font-size:12.3px;color:#333;font-weight:normal;">12/13/2021</div>
<svg class="r" style="left:1135.20px;top:1289.50px" width="12" height="12" viewBox="0 0 12 12"><circle cx="5.8" cy="5.8" r="5.6" fill="#f1c40f"/><path d="M2.2 5.8 L8.2 5.8" stroke="#fff" stroke-width="2" fill="none"/><path d="M5.6 3 L8.4 5.8 L5.6 8.6" stroke="#fff" stroke-width="1.7" fill="none"/></svg>
<svg class="r" style="left:1208.00px;top:1289.00px" width="12" height="12" viewBox="0 0 12 12"><rect x="0" y="0" width="11" height="11" rx="1.6" fill="#ea6874"/><path d="M2.4 5.6 L4.8 7.9 L8.8 3.4" stroke="#fff" stroke-width="1.7" fill="none"/></svg>
<div class="r" style="left:1262.00px;top:1289.70px;width:70.40px;height:13.00px;background:#f0f0f0;"></div>
<div class="t" style="left:1264.00px;top:1293.27px;font-size:7px;color:#fafafa;font-weight:bold;">0%</div>
<svg class="r" style="left:1345.80px;top:1285.00px" width="21" height="20" viewBox="0 0 21 20"><rect x="0" y="0" width="21" height="20" fill="#337ab7"/><path d="M12.2 5.6 L6.6 5.6 Q5.6 5.6 5.6 6.6 L5.6 12.6 Q5.6 13.6 6.6 13.6 L12.6 13.6 Q13.6 13.6 13.6 12.6 L13.6 10.4" stroke="#fff" stroke-width="1.2" fill="none"/><path d="M9 12.2 L9.6 10 L14.6 5 L16.4 6.8 L11.4 11.8 Z" fill="#fff"/></svg>
<div class="r" style="left:18.00px;top:1314.00px;width:1359.00px;height:35.00px;background:#f5f5f5;"></div>
<div class="r" style="left:18.00px;top:1349.00px;width:1359.00px;height:1.00px;background:#e3e3e3;"></div>
<div class="r" style="left:702.00px;top:1314.00px;width:1.00px;height:35.00px;background:#e3e3e3;"></div>
<div class="r" style="left:834.00px;top:1314.00px;width:1.00px;height:35.00px;background:#e3e3e3;"></div>
<div class="r" style="left:967.00px;top:1314.00px;width:1.00px;height:35.00px;background:#e3e3e3;"></div>
<div class="r" style="left:1035.00px;top:1314.00px;width:1.00px;height:35.00px;background:#e3e3e3;"></div>
<div class="r" style="left:1109.00px;top:1314.00px;width:1.00px;height:35.00px;background:#e3e3e3;"></div>
<div class="r" style="left:1171.00px;top:1314.00px;width:1.00px;height:35.00px;background:#e3e3e3;"></div>
<div class="r" style="left:1255.00px;top:1314.00px;width:1.00px;height:35.00px;background:#e3e3e3;"></div>
<div class="r" style="left:1339.00px;top:1314.00px;width:1.00px;height:35.00px;background:#e3e3e3;"></div>
<div class="t" style="left:26.60px;top:1325.20px;font-size:12.4px;color:#333;font-weight:normal;">Setup worksation</div>
<div class="t" style="left:709.60px;top:1325.29px;font-size:12.3px;color:#333;font-weight:normal;">Information systems</div>
<div class="t" style="left:841.40px;top:1325.29px;font-size:12.3px;color:#333;font-weight:normal;">Demo User</div>
<div class="t" style="left:973.30px;top:1325.29px;font-size:12.3px;color:#333;font-weight:normal;">12/7/2021</div>
<div class="t" style="left:1041.60px;top:1325.29px;font-size:12.3px;color:#333;font-weight:normal;">12/10/2021</div>
<svg class="r" style="left:1135.20px;top:1325.50px" width="12" height="12" viewBox="0 0 12 12"><circle cx="5.8" cy="5.8" r="5.6" fill="#f1c40f"/><path d="M2.2 5.8 L8.2 5.8" stroke="#fff" stroke-width="2" fill="none"/><path d="M5.6 3 L8.4 5.8 L5.6 8.6" stroke="#fff" stroke-width="1.7" fill="none"/></svg>
<svg class="r" style="left:1208.00px;top:1325.00px" width="12" height="12" viewBox="0 0 12 12"><rect x="0" y="0" width="11" height="11" rx="1.6" fill="#ea6874"/><path d="M2.4 5.6 L4.8 7.9 L8.8 3.4" stroke="#fff" stroke-width="1.7" fill="none"/></svg>
<div class="r" style="left:1262.00px;top:1325.70px;width:70.40px;height:13.00px;background:#f0f0f0;"></div>
<div class="t" style="left:1264.00px;top:1329.27px;font-size:7px;color:#fafafa;font-weight:bold;">0%</div>
<svg class="r" style="left:1345.80px;top:1321.00px" width="21" height="20" viewBox="0 0 21 20"><rect x="0" y="0" width="21" height="20" fill="#337ab7"/><path d="M12.2 5.6 L6.6 5.6 Q5.6 5.6 5.6 6.6 L5.6 12.6 Q5.6 13.6 6.6 13.6 L12.6 13.6 Q13.6 13.6 13.6 12.6 L13.6 10.4" stroke="#fff" stroke-width="1.2" fill="none"/><path d="M9 12.2 L9.6 10 L14.6 5 L16.4 6.8 L11.4 11.8 Z" fill="#fff"/></svg>
<div class="r" style="left:18.00px;top:1350.00px;width:1359.00px;height:35.00px;background:#f8fafc;"></div>
<div class="r" style="left:18.00px;top:1385.00px;width:1359.00px;height:1.00px;background:#e3e3e3;"></div>
<div class="r" style="left:702.00px;top:1350.00px;width:1.00px;height:35.00px;background:#e3e3e3;"></div>
<div class="r" style="left:834.00px;top:1350.00px;width:1.00px;height:35.00px;background:#e3e3e3;"></div>
<div class="r" style="left:967.00px;top:1350.00px;width:1.00px;height:35.00px;background:#e3e3e3;"></div>
<div class="r" style="left:1035.00px;top:1350.00px;width:1.00px;height:35.00px;background:#e3e3e3;"></div>
<div class="r" style="left:1109.00px;top:1350.00px;width:1.00px;height:35.00px;background:#e3e3e3;"></div>
<div class="r" style="left:1171.00px;top:1350.00px;width:1.00px;height:35.00px;background:#e3e3e3;"></div>
<div class="r" style="left:1255.00px;top:1350.00px;width:1.00px;height:35.00px;background:#e3e3e3;"></div>
<div class="r" style="left:1339.00px;top:1350.00px;width:1.00px;height:35.00px;background:#e3e3e3;"></div>
<div class="t" style="left:26.60px;top:1361.20px;font-size:12.4px;color:#333;font-weight:normal;">Install Windows 10</div>
<div class="t" style="left:709.60px;top:1361.29px;font-size:12.3px;color:#333;font-weight:normal;">Information systems</div>
<div class="t" style="left:841.40px;top:1361.29px;font-size:12.3px;color:#333;font-weight:normal;">Demo User</div>
<div class="t" style="left:973.30px;top:1361.29px;font-size:12.3px;color:#333;font-weight:normal;">12/8/2021</div>
<div class="t" style="left:1041.60px;top:1361.29px;font-size:12.3px;color:#333;font-weight:normal;">12/9/2021</div>
<svg class="r" style="left:1135.20px;top:1361.50px" width="12" height="12" viewBox="0 0 12 12"><circle cx="5.8" cy="5.8" r="5.6" fill="#f1c40f"/><path d="M2.2 5.8 L8.2 5.8" stroke="#fff" stroke-width="2" fill="none"/><path d="M5.6 3 L8.4 5.8 L5.6 8.6" stroke="#fff" stroke-width="1.7" fill="none"/></svg>
<svg class="r" style="left:1208.00px;top:1361.00px" width="12" height="12" viewBox="0 0 12 12"><rect x="0" y="0" width="11" height="11" rx="1.6" fill="#3c9d28"/><path d="M2.4 5.6 L4.8 7.9 L8.8 3.4" stroke="#fff" stroke-width="1.7" fill="none"/></svg>
<div class="r" style="left:1262.00px;top:1361.70px;width:70.40px;height:13.00px;background:#48a51f;"></div>
<div class="t" style="left:897.20px;width:800px;text-align:center;top:1365.27px;font-size:7px;color:#fff;font-weight:bold;">100%</div>
<svg class="r" style="left:1345.80px;top:1357.00px" width="21" height="20" viewBox="0 0 21 20"><rect x="0" y="0" width="21" height="20" fill="#337ab7"/><path d="M12.2 5.6 L6.6 5.6 Q5.6 5.6 5.6 6.6 L5.6 12.6 Q5.6 13.6 6.6 13.6 L12.6 13.6 Q13.6 13.6 13.6 12.6 L13.6 10.4" stroke="#fff" stroke-width="1.2" fill="none"/><path d="M9 12.2 L9.6 10 L14.6 5 L16.4 6.8 L11.4 11.8 Z" fill="#fff"/></svg>
<div class="r" style="left:18.00px;top:1385.00px;width:1359.00px;height:44.00px;background:#f3f3f3;"></div>
<div class="r" style="left:25.80px;top:1392.40px;width:30.17px;height:30.00px;background:#fff;border:1px solid #dadada;"></div>
<svg class="r" style="left:37.89px;top:1405.00px" width="7" height="6" viewBox="0 0 7 6"><rect x="0" y="0" width="1.4" height="6" fill="#333"/><path d="M6.2 0 L6.2 6 L1.8 3 Z" fill="#333"/></svg>
<div class="r" style="left:54.97px;top:1392.40px;width:30.17px;height:30.00px;background:#fff;border:1px solid #dadada;"></div>
<svg class="r" style="left:67.06px;top:1405.00px" width="7" height="6" viewBox="0 0 7 6"><path d="M5.2 0 L5.2 6 L0.6 3 Z" fill="#333"/></svg>
<div class="r" style="left:113.31px;top:1392.40px;width:30.17px;height:30.00px;background:#fff;border:1px solid #dadada;"></div>
<div class="t" style="left:-271.61px;width:800px;text-align:center;top:1401.79px;font-size:12.3px;color:#333;font-weight:normal;">2</div>
<div class="r" style="left:142.48px;top:1392.40px;width:30.17px;height:30.00px;background:#fff;border:1px solid #dadada;"></div>
<div class="t" style="left:-242.43px;width:800px;text-align:center;top:1401.79px;font-size:12.3px;color:#333;font-weight:normal;">3</div>
<div class="r" style="left:171.65px;top:1392.40px;width:30.17px;height:30.00px;background:#fff;border:1px solid #dadada;"></div>
<div class="t" style="left:-213.26px;width:800px;text-align:center;top:1401.79px;font-size:12.3px;color:#333;font-weight:normal;">4</div>
<div class="r" style="left:200.82px;top:1392.40px;width:30.17px;height:30.00px;background:#fff;border:1px solid #dadada;"></div>
<div class="t" style="left:-184.09px;width:800px;text-align:center;top:1401.79px;font-size:12.3px;color:#333;font-weight:normal;">5</div>
<div class="r" style="left:229.99px;top:1392.40px;width:30.17px;height:30.00px;background:#fff;border:1px solid #dadada;"></div>
<div class="t" style="left:-154.92px;width:800px;text-align:center;top:1401.79px;font-size:12.3px;color:#333;font-weight:normal;">6</div>
<div class="r" style="left:259.16px;top:1392.40px;width:30.17px;height:30.00px;background:#fff;border:1px solid #dadada;"></div>
<div class="t" style="left:-125.75px;width:800px;text-align:center;top:1401.79px;font-size:12.3px;color:#333;font-weight:normal;">7</div>
<div class="r" style="left:288.33px;top:1392.40px;width:30.17px;height:30.00px;background:#fff;border:1px solid #dadada;"></div>
<div class="t" style="left:-96.58px;width:800px;text-align:center;top:1401.79px;font-size:12.3px;color:#333;font-weight:normal;">8</div>
<div class="r" style="left:317.50px;top:1392.40px;width:30.17px;height:30.00px;background:#fff;border:1px solid #dadada;"></div>
<svg class="r" style="left:329.59px;top:1405.00px" width="7" height="6" viewBox="0 0 7 6"><path d="M0.8 0 L0.8 6 L5.4 3 Z" fill="#333"/></svg>
<div class="r" style="left:346.67px;top:1392.40px;width:30.17px;height:30.00px;background:#fff;border:1px solid #dadada;"></div>
<svg class="r" style="left:358.75px;top:1405.00px" width="7" height="6" viewBox="0 0 7 6"><rect x="4.8" y="0" width="1.4" height="6" fill="#333"/><path d="M0 0 L0 6 L4.4 3 Z" fill="#333"/></svg>
<div class="r" style="left:84.14px;top:1392.40px;width:30.17px;height:30.00px;background:#337ab7;border:1px solid #337ab7;"></div>
<div class="t" style="left:-300.77px;width:800px;text-align:center;top:1401.79px;font-size:12.3px;color:#fff;font-weight:normal;">1</div>
<div class="t" style="left:391.70px;top:1401.79px;font-size:12.3px;color:#333;font-weight:normal;">Page size:</div>
<div class="r" style="left:458.60px;top:1392.50px;width:53.40px;height:29.50px;background:#fff;border:1px solid #dadada;"></div>
<div class="t" style="left:464.00px;top:1401.79px;font-size:12.3px;color:#333;font-weight:normal;">5</div>
<svg class="r" style="left:494.50px;top:1404.00px" width="8" height="7" viewBox="0 0 8 7"><path d="M0 0 L7 0 L3.5 6 Z" fill="#333"/></svg>
<div class="t" style="right:25.00px;text-align:right;top:1401.79px;font-size:12.3px;color:#333;font-weight:normal;">38 items in 8 pages</div>
</body></html>
